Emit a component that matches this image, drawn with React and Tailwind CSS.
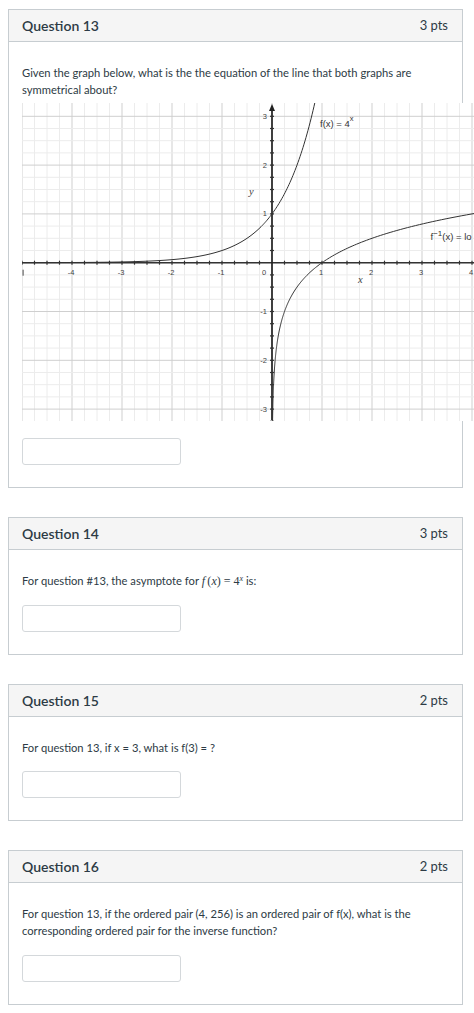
import React from 'react';

const X0 = 250;
const Y0 = 159.7;
const UX = 50;
const UY = 48.8;
const W = 460;
const H = 318;

const px = (x) => X0 + x * UX;
const py = (y) => Y0 - y * UY;

function expPath() {
  const pts = [];
  for (let x = -5.2; x <= 0.86; x += 0.02) {
    pts.push(`${px(x).toFixed(2)},${py(Math.pow(4, x)).toFixed(2)}`);
  }
  return 'M' + pts.join(' L');
}

function logPath() {
  const pts = [];
  for (let t = -3.3; t <= 1.2; t += 0.02) {
    const x = Math.pow(4, t);
    pts.push(`${px(x).toFixed(2)},${py(t).toFixed(2)}`);
  }
  return 'M' + pts.join(' L');
}

const Graph = () => {
  const vLines = [];
  for (let k = -20; k <= 18; k++) {
    const x = px(k / 4);
    if (x < 0 || x > W) continue;
    vLines.push(
      <line key={'v' + k} x1={x} y1={0} x2={x} y2={H} stroke={k % 4 === 0 ? '#cfcfcf' : '#ececec'} strokeWidth="1" />
    );
  }
  const hLines = [];
  for (let j = -12; j <= 12; j++) {
    const y = py(j / 4);
    if (y < 2 || y > H - 2) continue;
    hLines.push(
      <line key={'h' + j} x1={0} y1={y} x2={W} y2={y} stroke={j % 4 === 0 ? '#cfcfcf' : '#ececec'} strokeWidth="1" />
    );
  }
  const ticks = [];
  for (let k = -20; k <= 18; k++) {
    if (k === 0) continue;
    const x = px(k / 4);
    ticks.push(<line key={'tx' + k} x1={x} y1={Y0 - 2} x2={x} y2={Y0 + 2} stroke="#333" strokeWidth="1.2" />);
  }
  for (let j = -13; j <= 12; j++) {
    if (j === 0) continue;
    const y = py(j / 4);
    ticks.push(<line key={'ty' + j} x1={X0 - 2} y1={y} x2={X0 + 2} y2={y} stroke="#333" strokeWidth="1.2" />);
  }
  const xLabels = [-4, -3, -2, -1, 1, 2, 3, 4];
  const yLabels = [3, 2, 1, -1, -2, -3];

  return (
    <svg width={W} height={H} className="block max-w-none" style={{ fontFamily: '"Liberation Sans", Arial, sans-serif' }}>
      <rect x="0" y="0" width={W} height={H} fill="#fff" />
      {vLines}
      {hLines}
      <line x1={0} y1={Y0} x2={W} y2={Y0} stroke="#333" strokeWidth="1.5" />
      <line x1={X0} y1={4} x2={X0} y2={H - 1} stroke="#222" strokeWidth="1.7" />
      <polygon points={`${X0 - 3},${8} ${X0},${1} ${X0 + 3},${8}`} fill="#222" />
      {ticks}
      <rect x="0.5" y={Y0 + 7} width="1.2" height="6" fill="#666" />
      {xLabels.map((n) => (
        <text key={'xl' + n} x={px(n) - 1} y={Y0 + 12} fontSize="7.5" fill="#444" textAnchor="middle">
          {n}
        </text>
      ))}
      <text x={X0 - 8} y={Y0 + 12} fontSize="7.5" fill="#444" textAnchor="middle">0</text>
      {yLabels.map((n) => (
        <text key={'yl' + n} x={X0 - 5} y={py(n) + 2.5} fontSize="7.5" fill="#444" textAnchor="end">
          {n}
        </text>
      ))}
      <path d={expPath()} fill="none" stroke="#333" strokeWidth="1" />
      <path d={logPath()} fill="none" stroke="#333" strokeWidth="1" />
      <text x={298} y={24} fontSize="9.5" fill="#333">
        f(x) = 4<tspan dy="-6" fontSize="7.5">x</tspan>
      </text>
      <text x={408.5} y={137} fontSize="9.5" fill="#333">
        f<tspan dy="-4" fontSize="8">−1</tspan><tspan dy="4">(x) = lo</tspan>
      </text>
      <text x={227} y={92} fontSize="10.5" fill="#444" fontStyle="italic" style={{ fontFamily: '"Liberation Serif", serif' }}>y</text>
      <text x={336} y={180} fontSize="10.5" fill="#444" fontStyle="italic" style={{ fontFamily: '"Liberation Serif", serif' }}>x</text>
    </svg>
  );
};

const Card = ({ title, pts, children }) => (
  <div className="w-[455px] border border-[#c7cdd1] bg-white">
    <div className="flex h-[32px] items-center justify-between border-b border-[#c7cdd1] bg-[#f5f5f5] pl-[13px] pr-[14px]">
      <span className="text-[14px] font-semibold text-[#2d3b45]">{title}</span>
      <span className="text-[13px] text-[#2d3b45]">{pts}</span>
    </div>
    <div className="pl-[13px] pr-[14px] pt-[22px] pb-[22px] text-[11.2px] leading-[17px] text-[#2d3b45]">
      {children}
      <div className="h-[27px] w-[159px] rounded-[3px] border border-[#d4d8db] bg-white" />
    </div>
  </div>
);

const App = () => {
  return (
    <div className="w-full overflow-hidden bg-white" style={{ fontFamily: 'Lato, "Liberation Sans", sans-serif' }}>
      <div className="flex flex-col gap-[29px] pl-2 pt-[9px] pb-[11px]">
        <Card title="Question 13" pts="3 pts">
          <p>Given the graph below, what is the the equation of the line that both graphs are symmetrical about?</p>
          <div className="mt-[5px] mb-[17px]">
            <Graph />
          </div>
        </Card>
        <Card title="Question 14" pts="3 pts">
          <p className="mb-[15px]">
            For question #13, the asymptote for{' '}
            <span className="text-[12px]" style={{ fontFamily: '"Liberation Serif", serif' }}>
              <i>f</i>&thinsp;(<i>x</i>) = 4<sup className="text-[8px]"><i>x</i></sup>
            </span>{' '}
            is:
          </p>
        </Card>
        <Card title="Question 15" pts="2 pts">
          <p className="mb-[15px]">For question 13, if x = 3, what is f(3) = ?</p>
        </Card>
        <Card title="Question 16" pts="2 pts">
          <p className="mb-[16px]">
            For question 13, if the ordered pair (4, 256) is an ordered pair of f(x), what is the corresponding ordered pair for the inverse function?
          </p>
        </Card>
      </div>
    </div>
  );
};

export default App;
